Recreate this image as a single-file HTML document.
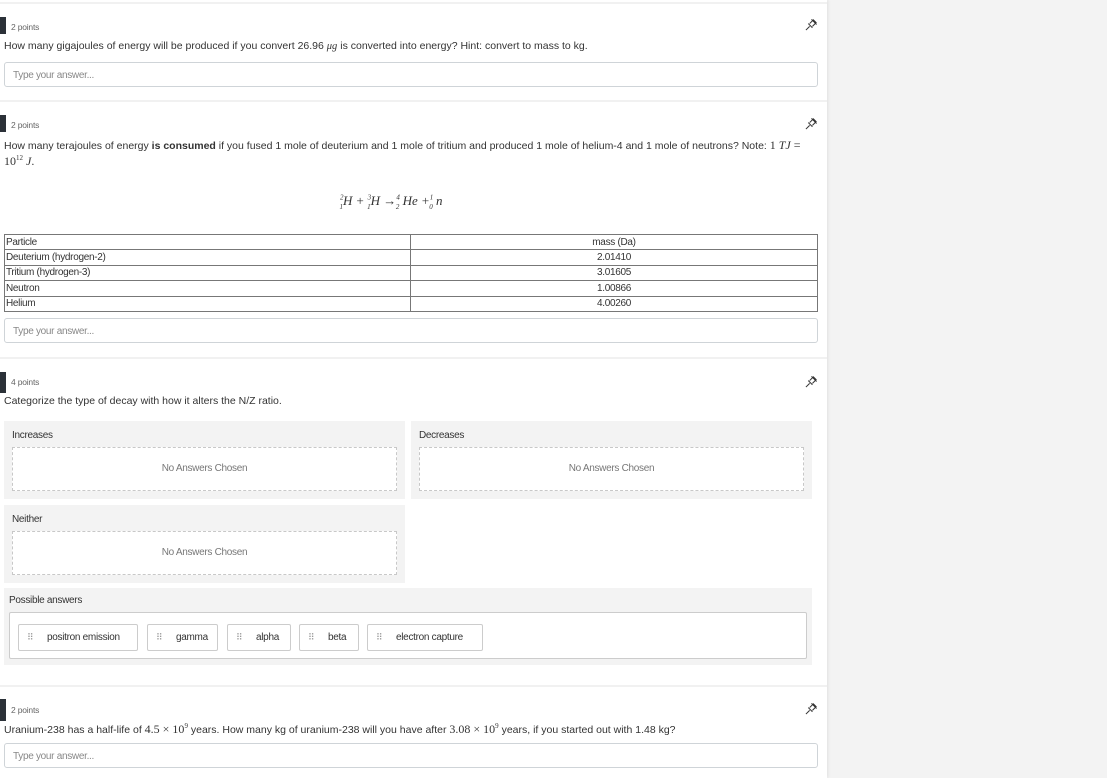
<!DOCTYPE html>
<html><head><meta charset="utf-8"><style>
*{box-sizing:border-box;margin:0;padding:0}
body{width:1107px;height:778px;background:#f3f3f3;font-family:"Liberation Sans",sans-serif;color:#333;position:relative;overflow:hidden}
.main{position:absolute;left:0;top:0;width:827px;height:778px;background:#fff;box-shadow:1px 0 3px rgba(0,0,0,.08)}
.a{position:absolute;white-space:nowrap}
.sep{position:absolute;left:0;width:827px;height:2px;background:#f1f1f1}
.bar{position:absolute;left:0;width:6px;background:#2b3138}
.pts{position:absolute;left:11px;font-size:8.5px;color:#666;letter-spacing:-.2px}
.q{position:absolute;left:4px;font-size:10.5px;letter-spacing:0;color:#333;white-space:nowrap}
.inp{position:absolute;left:4px;width:814px;height:25px;border:1px solid #cfd4d8;border-radius:3px;font-size:10px;color:#888;padding:7px 8px;letter-spacing:-.3px}
.pin{position:absolute;left:805px}
.m{font-family:"Liberation Serif",serif;font-style:italic}
table{position:absolute;left:4px;top:234px;width:814px;border-collapse:collapse;font-size:10px;letter-spacing:-.3px}
td{border:1px solid #777;height:15.4px;padding:0 1px;line-height:13px}
td.r{text-align:center;width:407px}
.box{position:absolute;background:#f3f3f3}
.box .t{position:absolute;left:8px;top:9px;font-size:10px;letter-spacing:-.3px}
.dash{position:absolute;left:8px;right:8px;top:26px;height:44px;border:1px dashed #c8c8c8;background:#fff;font-size:10px;color:#777;text-align:center;line-height:42px;letter-spacing:-.3px}
.chip{position:absolute;top:624px;height:27px;border:1px solid #ccc;border-radius:2px;background:#fff;font-size:10px;line-height:25px;padding-left:28px;letter-spacing:-.3px}
.chip:before{content:"⠿";position:absolute;left:8px;top:0;color:#999;font-size:9px}
sup,sub{line-height:0}
</style></head><body>
<div class="main">
<div class="sep" style="top:2px"></div>
<div class="bar" style="top:17px;height:17px"></div>
<div class="pts" style="top:22px">2 points</div>
<svg class="pin" style="top:18px" width="13" height="13" viewBox="0 0 14 14"><g stroke="#333" fill="none" stroke-width="1.1"><path d="M1 13 L5 9"/><path d="M3.5 6 L8 10.5 M5 6 L9 2 L12 5 L8 9 M7 1.5 L12.5 7"/></g></svg>
<div class="q" style="top:40px">How many gigajoules of energy will be produced if you convert 26.96 <span class="m">μg</span> is converted into energy? Hint: convert to mass to kg.</div>
<div class="inp" style="top:62px">Type your answer...</div>
<div class="sep" style="top:100px"></div>

<div class="bar" style="top:115px;height:17px"></div>
<div class="pts" style="top:120px">2 points</div>
<svg class="pin" style="top:117px" width="13" height="13" viewBox="0 0 14 14"><g stroke="#333" fill="none" stroke-width="1.1"><path d="M1 13 L5 9"/><path d="M3.5 6 L8 10.5 M5 6 L9 2 L12 5 L8 9 M7 1.5 L12.5 7"/></g></svg>
<div class="q" style="top:138px">How many terajoules of energy <b>is consumed</b> if you fused 1 mole of deuterium and 1 mole of tritium and produced 1 mole of helium-4 and 1 mole of neutrons? Note: <span class="m" style="font-style:normal;font-size:12px">1 <i>TJ</i> =</span></div>
<div class="q m" style="top:154px;font-style:normal;font-size:12px">10<sup style="font-size:7px">12</sup> <i>J</i>.</div>
<div class="a m" style="left:340px;top:193px;font-size:13px"><sup style="font-size:7px">2</sup><sub style="font-size:7px;margin-left:-4px">1</sub>H + <sup style="font-size:7px">3</sup><sub style="font-size:7px;margin-left:-4px">1</sub>H →<sup style="font-size:7px">4</sup><sub style="font-size:7px;margin-left:-4px">2</sub> He +<sup style="font-size:7px">1</sup><sub style="font-size:7px;margin-left:-4px">0</sub> n</div>
<table>
<tr><td>Particle</td><td class="r">mass (Da)</td></tr>
<tr><td>Deuterium (hydrogen-2)</td><td class="r">2.01410</td></tr>
<tr><td>Tritium (hydrogen-3)</td><td class="r">3.01605</td></tr>
<tr><td>Neutron</td><td class="r">1.00866</td></tr>
<tr><td>Helium</td><td class="r">4.00260</td></tr>
</table>
<div class="inp" style="top:318px">Type your answer...</div>
<div class="sep" style="top:357px"></div>

<div class="bar" style="top:372px;height:21px"></div>
<div class="pts" style="top:377px">4 points</div>
<svg class="pin" style="top:375px" width="13" height="13" viewBox="0 0 14 14"><g stroke="#333" fill="none" stroke-width="1.1"><path d="M1 13 L5 9"/><path d="M3.5 6 L8 10.5 M5 6 L9 2 L12 5 L8 9 M7 1.5 L12.5 7"/></g></svg>
<div class="q" style="top:395px">Categorize the type of decay with how it alters the N/Z ratio.</div>
<div class="box" style="left:4px;top:421px;width:401px;height:78px"><div class="t">Increases</div><div class="dash">No Answers Chosen</div></div>
<div class="box" style="left:411px;top:421px;width:401px;height:78px"><div class="t">Decreases</div><div class="dash">No Answers Chosen</div></div>
<div class="box" style="left:4px;top:505px;width:401px;height:78px"><div class="t">Neither</div><div class="dash">No Answers Chosen</div></div>
<div class="box" style="left:4px;top:588px;width:808px;height:77px"><div class="t" style="left:5px;top:7px">Possible answers</div>
<div style="position:absolute;left:5px;top:24px;width:798px;height:47px;background:#fff;border:1px solid #ccc;border-radius:2px"></div></div>
<div class="chip" style="left:18px;width:120px">positron emission</div>
<div class="chip" style="left:147px;width:71px">gamma</div>
<div class="chip" style="left:227px;width:64px">alpha</div>
<div class="chip" style="left:299px;width:60px">beta</div>
<div class="chip" style="left:367px;width:116px">electron capture</div>
<div class="sep" style="top:685px"></div>

<div class="bar" style="top:699px;height:22px"></div>
<div class="pts" style="top:705px">2 points</div>
<svg class="pin" style="top:702px" width="13" height="13" viewBox="0 0 14 14"><g stroke="#333" fill="none" stroke-width="1.1"><path d="M1 13 L5 9"/><path d="M3.5 6 L8 10.5 M5 6 L9 2 L12 5 L8 9 M7 1.5 L12.5 7"/></g></svg>
<div class="q" style="top:722px;left:4px">Uranium-238 has a half-life of <span class="m" style="font-style:normal;font-size:12px">4.5 × 10<sup style="font-size:7px">9</sup></span> years. How many kg of uranium-238 will you have after <span class="m" style="font-style:normal;font-size:12px">3.08 × 10<sup style="font-size:7px">9</sup></span> years, if you started out with 1.48 kg?</div>
<div class="inp" style="top:743px">Type your answer...</div>
</div>
</body></html>
